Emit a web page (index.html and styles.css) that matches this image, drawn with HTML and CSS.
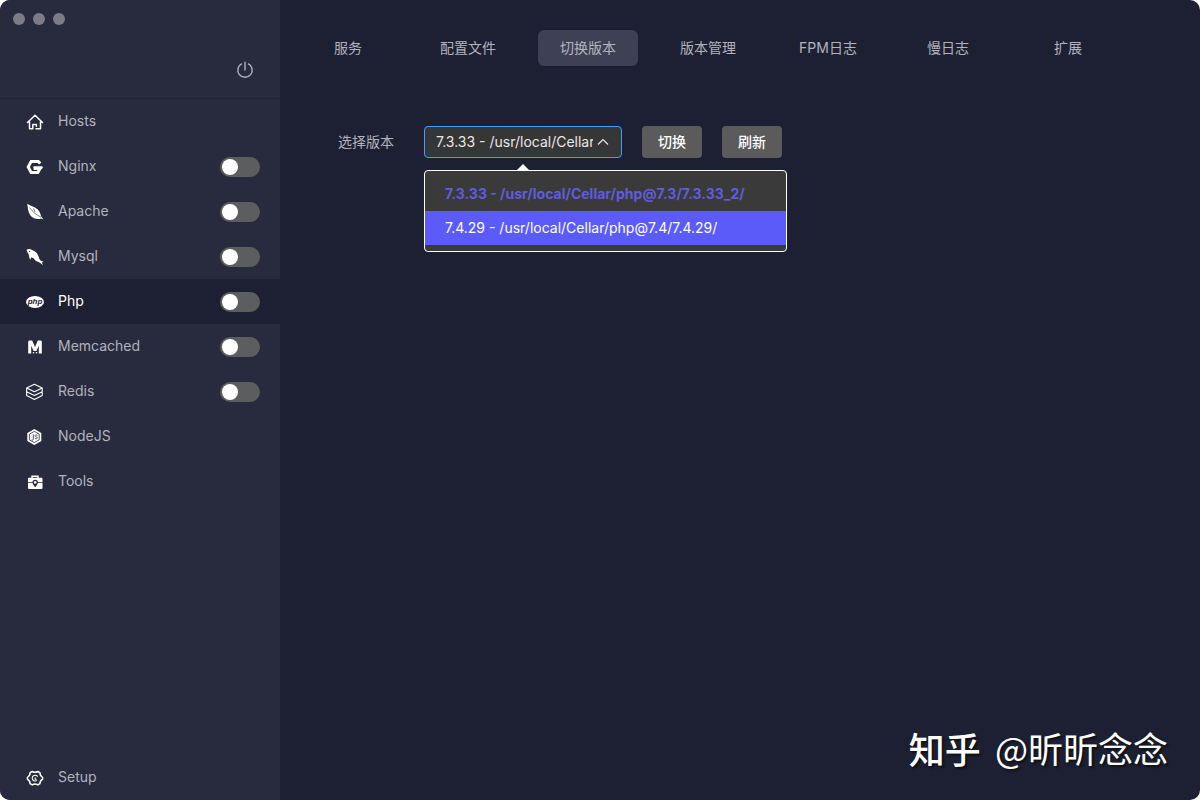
FILE: index.html
```html
<!DOCTYPE html>
<html lang="zh-CN">

<head>
  <meta charset="UTF-8">
  <meta name="viewport" content="width=device-width, initial-scale=1.0">
  <title>Php</title>
  <link rel="stylesheet" href="styles.css">
</head>

<body>
  <div class="app">
    <aside class="aside">
      <div class="top">
        <div class="dots"><i></i><i></i><i></i></div>
        <button class="power" aria-label="power">
          <svg viewBox="0 0 18 18"><path d="M9 .8v8.7M5.9 2.6a7.2 7.2 0 1 0 6.2 0" fill="none" stroke="currentColor" stroke-width="1.4"/></svg>
        </button>
      </div>

      <ul class="menu">
        <li>
          <a href="#">
            <svg viewBox="0 0 18 18"><path d="M1.500 9.500 9 2.200l7.500 7.300M3.500 8.500v7.200h3.300v-4.200h3.600v1.800M10 15.700h4.500V8.500" fill="none" stroke="#fff" stroke-width="1.500" stroke-linejoin="round" stroke-linecap="round"/></svg>
            <span>Hosts</span>
          </a>
        </li>
        <li>
          <a href="#">
            <svg viewBox="0 0 18 18"><path d="M14.200 5.600 12.300 3.400H5.200L2.200 9l3 5.600h6.600l2.300-4.100H7.600" fill="none" stroke="#fff" stroke-width="3"/><path d="M7.500 8.200h9v2.300h-9z" fill="#fff"/></svg>
            <span>Nginx</span>
          </a>
          <input type="checkbox" class="switch" aria-label="Nginx">
        </li>
        <li>
          <a href="#">
            <svg viewBox="0 0 18 18"><path d="M1.200.8C4.500 3.400 9 3.700 12 6.700c1.800 2 2.600 4.500 3.200 6.700l2.300 3.200-2.600-1.100c-4 1.500-8.400-.3-10.800-3.500C1.700 8.800 2 4.500 1.200.8z" fill="#fff"/><path d="M3.500 4.500c3 4.300 6.500 7 11.700 9.800M7.500 5.400l1.600 3.800" fill="none" stroke="#282b3d" stroke-width=".6"/></svg>
            <span>Apache</span>
          </a>
          <input type="checkbox" class="switch" aria-label="Apache">
        </li>
        <li>
          <a href="#">
            <svg viewBox="0 0 18 18"><path d="M.7 1.700C2.500.3 5 .9 6.500 2.300c2.700.7 4.700 2.700 5.700 5.100.7 1.900 1 3.900 2.300 5.100l3 1.200-1.700.8 1.300 2.700c-1.700-1-2.500-2.300-4.200-2.900-2.300-.8-4.300-2-5.500-4.200L5 9.500l-.5 2.300C2.900 10.300 3.400 7.900 2.500 6 1.700 4.600.6 3.300.7 1.700z" fill="#fff"/><circle cx="3.600" cy="3.300" r=".6" fill="#282b3d"/></svg>
            <span>Mysql</span>
          </a>
          <input type="checkbox" class="switch" aria-label="Mysql">
        </li>
        <li class="active">
          <a href="#">
            <svg viewBox="0 0 18 18"><ellipse cx="9" cy="9" rx="9" ry="6" fill="#fff"/><text x="9" y="11" text-anchor="middle" class="php">php</text></svg>
            <span>Php</span>
          </a>
          <input type="checkbox" class="switch" aria-label="Php">
        </li>
        <li>
          <a href="#">
            <svg viewBox="0 0 18 18"><path d="M2.200 3.300 3.200 2.500h3L9 9l2.800-6.500h3l1 .8v12.200h-3V7.800L10.400 13H7.600L5.200 7.800v7.700h-3z" fill="#fff"/><circle cx="7.500" cy="14.700" r=".8" fill="#fff"/><circle cx="10.500" cy="14.700" r=".8" fill="#fff"/></svg>
            <span>Memcached</span>
          </a>
          <input type="checkbox" class="switch" aria-label="Memcached">
        </li>
        <li>
          <a href="#">
            <svg viewBox="0 0 18 18"><path d="M8.400 1.300 16.200 5 8.400 8.800.6 5zM.6 5v3.700l7.800 3.800 7.800-3.800V5M.6 8.700v3.800l7.800 4 7.800-4V8.700" fill="none" stroke="#fff" stroke-width="1.100" stroke-linejoin="round"/></svg>
            <span>Redis</span>
          </a>
          <input type="checkbox" class="switch" aria-label="Redis">
        </li>
        <li>
          <a href="#">
            <svg viewBox="0 0 18 18"><path d="M8.300 1 15.300 5v8l-7 4-7-4V5z" fill="#fff"/><path d="M8.300 3.400 13.200 6.200v5.600l-4.900 2.800-4.900-2.800V6.200z" fill="none" stroke="#282b3d" stroke-width=".8"/><path d="M7.300 6.300v5c0 .8-.9 1-1.700.5M11.300 7.300c-1.500-1-2.600-.2-2.300.8.300.9 2.300.5 2.300 1.700 0 1.100-1.500 1.200-2.500.5" fill="none" stroke="#282b3d" stroke-width=".8"/></svg>
            <span>NodeJS</span>
          </a>
        </li>
        <li>
          <a href="#">
            <svg viewBox="0 0 18 18"><path d="M6 5V3.300h6V5" fill="none" stroke="#fff" stroke-width="1.400"/><path d="M3 4.700h12.500a1 1 0 0 1 1 1v3.500H2V5.700a1 1 0 0 1 1-1zM2 10h14.500v5a1 1 0 0 1-1 1H3a1 1 0 0 1-1-1z" fill="#fff"/><path d="M9.200 6.700a2.700 2.700 0 0 1 2.700 2.700c0 2-2.700 4.600-2.700 4.600S6.500 11.400 6.500 9.400a2.700 2.700 0 0 1 2.700-2.700z" fill="#282b3d"/><circle cx="9.200" cy="9.400" r="1.300" fill="#fff"/></svg>
            <span>Tools</span>
          </a>
        </li>
        <li class="setup">
          <a href="#">
            <svg viewBox="0 0 18 18"><path d="M6.200 2.500c1.900 1.100 3.700 1.100 5.600 0l2.100 1.200c0 2.100.9 3.600 2.700 4.600v1.800c-1.800 1-2.700 2.500-2.700 4.600l-2.100 1.200c-1.900-1.100-3.700-1.100-5.600 0l-2.100-1.200c0-2.100-.9-3.600-2.700-4.600V8.300c1.800-1 2.700-2.500 2.700-4.600z" fill="none" stroke="#fff" stroke-width="1.500" stroke-linejoin="round"/><path d="M11.600 7.600A2.900 2.900 0 1 0 11 11.300M9.200 8.600v1.600h1.400" fill="none" stroke="#fff" stroke-width="1.100"/></svg>
            <span>Setup</span>
          </a>
        </li>
      </ul>
    </aside>

    <main class="main">
      <nav class="tabs">
        <button>服务</button>
        <button>配置文件</button>
        <button class="active">切换版本</button>
        <button>版本管理</button>
        <button>FPM日志</button>
        <button>慢日志</button>
        <button>扩展</button>
      </nav>

      <div class="form">
        <label for="version">选择版本</label>
        <div class="select">
          <select id="version">
            <option>7.3.33 - /usr/local/Cellar/php@7.3/7.3.33_2/</option>
            <option>7.4.29 - /usr/local/Cellar/php@7.4/7.4.29/</option>
          </select>
          <svg class="arrow" viewBox="0 0 12 12"><path d="M1 8.500 6 3.500l5 5" fill="none" stroke="currentColor" stroke-width="1.200"/></svg>
          <ul class="dropdown" role="listbox">
            <li class="selected" role="option">7.3.33 - /usr/local/Cellar/php@7.3/7.3.33_2/</li>
            <li class="hover" role="option">7.4.29 - /usr/local/Cellar/php@7.4/7.4.29/</li>
          </ul>
        </div>
        <button class="btn">切换</button>
        <button class="btn">刷新</button>
      </div>
    </main>

    <div class="mark"><b>知乎</b><span>@昕昕念念</span></div>
  </div>
</body>

</html>
```

FILE: styles.css
```css
* {
  margin: 0;
  padding: 0;
  box-sizing: border-box;
}

body {
  background: #fff;
  font-family: Inter, "Noto Sans CJK SC", sans-serif;
  font-size: 14px;
  color: #b2b3be;
}

ul {
  list-style: none;
}

button,
select {
  font: inherit;
  color: inherit;
  border: none;
  background: none;
  cursor: pointer;
}

.app {
  position: relative;
  display: flex;
  min-height: 100vh;
  border-radius: 10px;
  overflow: hidden;
  background: #1d2033;
}

/* 左侧菜单 */
.aside {
  display: flex;
  flex-direction: column;
  flex: 0 0 280px;
  background: #282b3d;
}

.top {
  display: flex;
  flex-direction: column;
  justify-content: space-between;
  height: 99px;
  padding: 13px 26px 19px 13px;
  border-bottom: 1px solid #212436;
}

.dots {
  display: flex;
  gap: 8px;
}

.dots i {
  width: 12px;
  height: 12px;
  border-radius: 50%;
  background: #7b7c86;
}

.power {
  align-self: flex-end;
  width: 18px;
  height: 18px;
}

.power svg {
  display: block;
}

.menu {
  display: flex;
  flex-direction: column;
  flex: 1;
}

.menu li {
  display: flex;
  align-items: center;
  height: 45px;
  padding: 0 20px 0 26px;
}

.menu a {
  display: flex;
  align-items: center;
  flex: 1;
  gap: 14px;
  color: inherit;
  text-decoration: none;
}

.menu span {
  padding-bottom: 2px;
}

.menu svg {
  width: 18px;
  height: 18px;
}

.menu .active {
  background: #1d2033;
  color: #fff;
}

.menu .setup {
  margin-top: auto;
}

.php {
  font: italic bold 8px "Liberation Sans", sans-serif;
  fill: #1d2033;
}

.switch {
  appearance: none;
  width: 40px;
  height: 20px;
  padding: 2px;
  border-radius: 10px;
  background: #5c5d5e;
  cursor: pointer;
}

.switch::before {
  content: "";
  display: block;
  width: 16px;
  height: 16px;
  border-radius: 50%;
  background: #fff;
}

.switch:checked::before {
  margin-left: auto;
}

/* 右侧内容 */
.main {
  flex: 1;
  padding: 30px 18px;
}

.tabs {
  display: flex;
  gap: 20px;
}

.tabs button {
  width: 100px;
  height: 36px;
  padding-bottom: 2px;
  border-radius: 6px;
}

.tabs .active {
  background: #3e4155;
}

.form {
  display: flex;
  align-items: center;
  gap: 20px;
  margin-top: 60px;
  padding-left: 40px;
}

.form label {
  margin-right: 10px;
  padding-bottom: 2px;
}

.select {
  position: relative;
  width: 198px;
}

.select select {
  display: block;
  appearance: none;
  width: 100%;
  height: 32px;
  padding: 0 28px 2px 11px;
  border: 1px solid #409eff;
  border-radius: 4px;
  background: #363636;
  color: #e8e8e8;
}

.arrow {
  position: absolute;
  top: 10px;
  right: 13px;
  width: 12px;
  height: 12px;
  color: #e8e8e8;
  pointer-events: none;
}

.dropdown {
  position: absolute;
  top: 44px;
  left: 0;
  padding: 6px 0;
  border: 1px solid #fff;
  border-radius: 4px;
  background: #3a3a3a;
  white-space: nowrap;
}

.dropdown::before {
  content: "";
  position: absolute;
  top: -7px;
  left: 92px;
  border: 6px solid transparent;
  border-top: none;
  border-bottom-color: #fff;
}

.dropdown li {
  height: 34px;
  padding: 0 41px 0 20px;
  line-height: 34px;
}

.dropdown .selected {
  color: #605cde;
  font-weight: 700;
}

.dropdown .hover {
  background: #5b5bfa;
  color: #fff;
}

.btn {
  width: 60px;
  height: 32px;
  padding-bottom: 2px;
  border-radius: 4px;
  background: #5b5b5b;
  color: #fff;
  font-weight: 500;
}

/* 水印 */
.mark {
  position: absolute;
  right: 32px;
  bottom: 26px;
  display: flex;
  align-items: center;
  gap: 14px;
  color: #fff;
  font-family: "Noto Sans CJK SC", sans-serif;
  font-size: 35px;
  line-height: 52px;
  text-shadow: 2px 2px 2px #111;
}

.mark b {
  font-size: 36px;
  font-weight: 500;
}
```
